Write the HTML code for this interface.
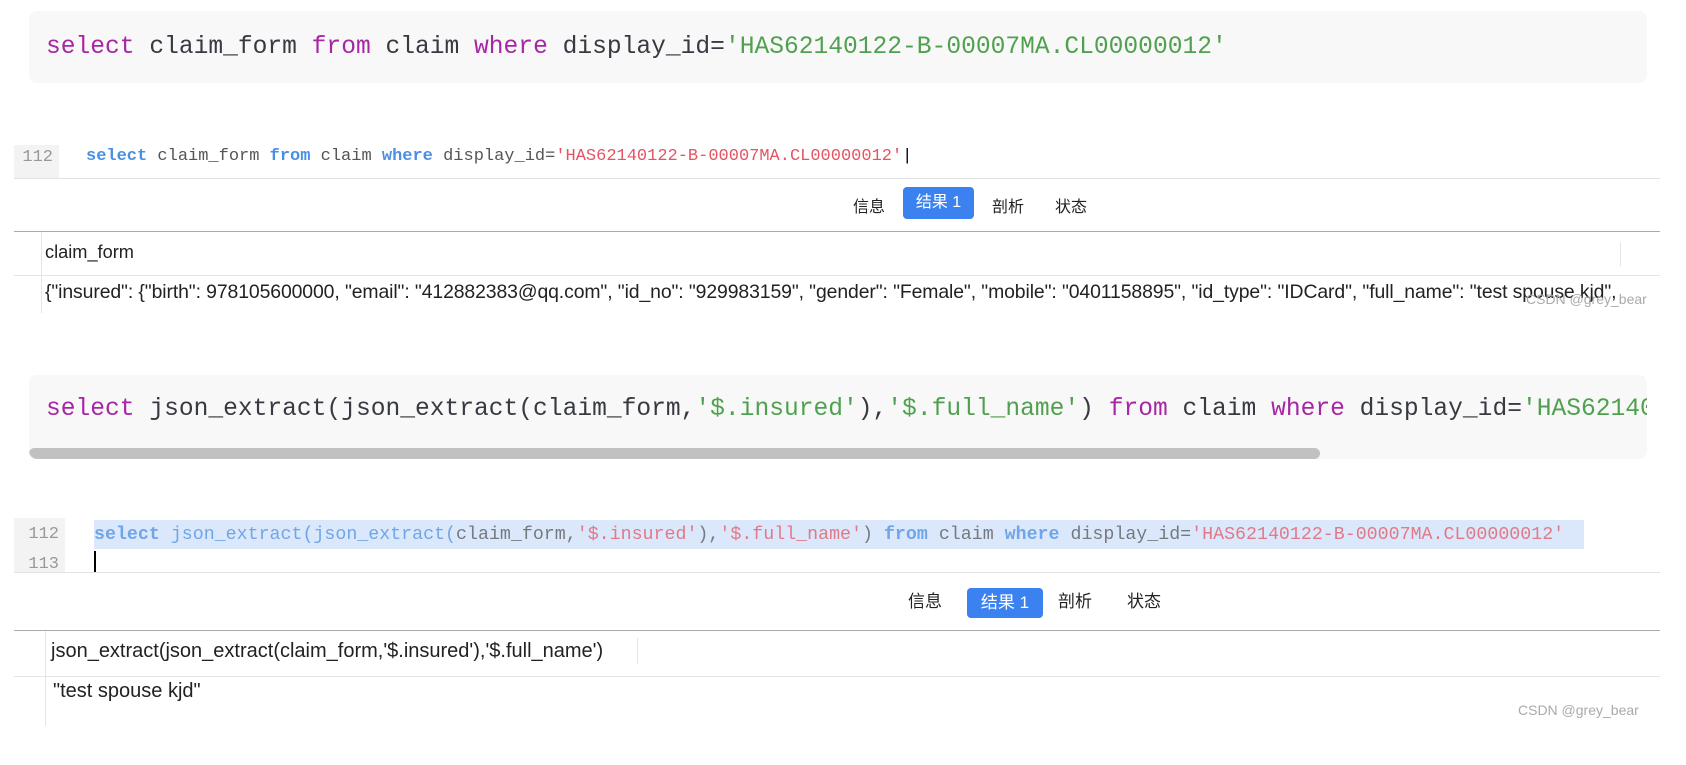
<!DOCTYPE html>
<html><head><meta charset="utf-8"><style>
body{margin:0;width:1686px;height:765px;background:#fff;position:relative;overflow:hidden;font-family:"Liberation Sans","Noto Sans CJK SC",sans-serif}
.a{position:absolute;white-space:pre}
.mono{font-family:"Liberation Mono","DejaVu Sans Mono",monospace}
.blk{position:absolute;background:#f8f8f8;border-radius:8px}
.k{color:#a626a4}.s{color:#50a14f}.t{color:#383a42}
.ek{color:#4a90e2;font-weight:bold}.es{color:#e45463}.et{color:#555}
.ln{position:absolute;background:#f3f3f3;color:#999;font-family:"Liberation Mono",monospace;font-size:17px;text-align:right}
.hl{position:absolute;height:1px;background:#ddd}
.tab{position:absolute;font-size:16px;color:#222}
.btn{position:absolute;background:#3b82f0;color:#fff;border-radius:4px;font-size:16px;text-align:center}
.wm{position:absolute;color:#aaa;font-size:14px}
</style></head><body>
<div class="blk" style="left:29px;top:11px;width:1618px;height:72px"></div>
<div class="a mono" style="left:46px;top:33px;font-size:24.6px;line-height:30px"><span class="k">select</span><span class="t"> claim_form </span><span class="k">from</span><span class="t"> claim </span><span class="k">where</span><span class="t"> display_id=</span><span class="s">'HAS62140122-B-00007MA.CL00000012'</span></div>

<div class="ln" style="left:14px;top:145px;width:45px;height:33px;line-height:22px;padding-top:2px;padding-right:6px;box-sizing:border-box">112</div>
<div class="a mono" style="left:86px;top:146px;font-size:17px;line-height:22px"><span class="ek">select</span><span class="et"> claim_form </span><span class="ek">from</span><span class="et"> claim </span><span class="ek">where</span><span class="et"> display_id=</span><span class="es">'HAS62140122-B-00007MA.CL00000012'</span><span style="color:#000">|</span></div>
<div class="hl" style="left:14px;top:178px;width:1646px;background:#e2e2e2"></div>
<div class="tab" style="left:853px;top:193px">信息</div>
<div class="btn" style="left:903px;top:187px;width:71px;height:32px;line-height:32px">结果 1</div>
<div class="tab" style="left:992px;top:193px">剖析</div>
<div class="tab" style="left:1055px;top:193px">状态</div>
<div class="hl" style="left:14px;top:231px;width:1646px;background:#aaa"></div>
<div class="hl" style="left:41px;top:232px;width:1px;height:81px;background:#e5e5e5"></div>
<div class="hl" style="left:1620px;top:242px;width:1px;height:24px;background:#e5e5e5"></div>
<div class="a" style="left:45px;top:242px;font-size:18.2px;color:#222">claim_form</div>
<div class="hl" style="left:14px;top:275px;width:1646px;background:#e5e5e5"></div>
<div class="a" style="left:45px;top:281px;font-size:19.4px;color:#222;letter-spacing:-0.1px">{"insured": {"birth": 978105600000, "email": "412882383@qq.com", "id_no": "929983159", "gender": "Female", "mobile": "0401158895", "id_type": "IDCard", "full_name": "test spouse kjd",</div>
<div class="wm" style="left:1526px;top:291px">CSDN @grey_bear</div>

<div class="blk" style="left:29px;top:375px;width:1618px;height:84px;overflow:hidden">
<div class="a mono" style="left:17px;top:20px;font-size:24.6px;line-height:30px"><span class="k">select</span><span class="t"> json_extract(json_extract(claim_form,</span><span class="s">'$.insured'</span><span class="t">),</span><span class="s">'$.full_name'</span><span class="t">) </span><span class="k">from</span><span class="t"> claim </span><span class="k">where</span><span class="t"> display_id=</span><span class="s">'HAS62140122-B-00007MA.CL00000012'</span></div>
<div style="position:absolute;left:0;top:73px;width:1291px;height:11px;background:#c1c1c1;border-radius:6px"></div>
</div>

<div class="ln" style="left:14px;top:518px;width:51px;height:54px;line-height:30px;padding-right:6px;box-sizing:border-box;padding-top:2px">112<br>113</div>
<div style="position:absolute;left:94px;top:520px;width:1490px;height:29px;background:#dbe8fb"></div>
<div class="a mono" style="left:94px;top:524px;font-size:18.3px;line-height:22px;opacity:.75"><span class="ek">select</span><span style="color:#4a90e2"> json_extract(json_extract(</span><span class="et">claim_form,</span><span class="es">'$.insured'</span><span class="et">),</span><span class="es">'$.full_name'</span><span class="et">) </span><span class="ek">from</span><span class="et"> claim </span><span class="ek">where</span><span class="et"> display_id=</span><span class="es">'HAS62140122-B-00007MA.CL00000012'</span></div>
<div style="position:absolute;left:94px;top:551px;width:2px;height:21px;background:#000"></div>
<div class="hl" style="left:14px;top:572px;width:1646px;background:#e2e2e2"></div>
<div class="tab" style="left:908px;top:587px;font-size:17px">信息</div>
<div class="btn" style="left:967px;top:588px;width:76px;height:30px;line-height:30px;font-size:17px">结果 1</div>
<div class="tab" style="left:1058px;top:587px;font-size:17px">剖析</div>
<div class="tab" style="left:1127px;top:587px;font-size:17px">状态</div>
<div class="hl" style="left:14px;top:630px;width:1646px;background:#aaa"></div>
<div class="hl" style="left:45px;top:631px;width:1px;height:95px;background:#e5e5e5"></div>
<div class="hl" style="left:637px;top:638px;width:1px;height:26px;background:#e5e5e5"></div>
<div class="a" style="left:51px;top:640px;font-size:20px;color:#222">json_extract(json_extract(claim_form,'$.insured'),'$.full_name')</div>
<div class="hl" style="left:14px;top:676px;width:1646px;background:#e5e5e5"></div>
<div class="a" style="left:53px;top:680px;font-size:20px;color:#222">"test spouse kjd"</div>
<div class="wm" style="left:1518px;top:702px">CSDN @grey_bear</div>
</body></html>
